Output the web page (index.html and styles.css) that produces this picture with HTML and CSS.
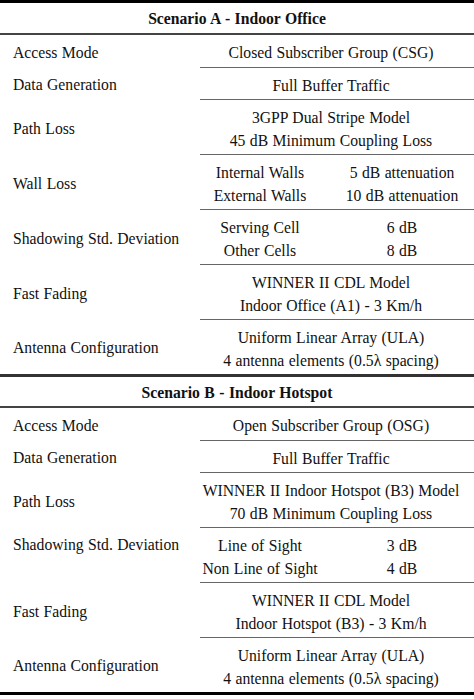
FILE: index.html
```html
<!DOCTYPE html>
<html>
<head>
<meta charset="utf-8">
<link rel="stylesheet" href="styles.css">
</head>
<body>
<div class="table">
  <div class="title top-bar">Scenario A - Indoor Office</div>
  <div class="row">
    <div class="label">Access Mode</div>
    <div class="value">Closed Subscriber Group (CSG)</div>
  </div>
  <div class="row">
    <div class="label">Data Generation</div>
    <div class="value">Full Buffer Traffic</div>
  </div>
  <div class="row">
    <div class="label">Path Loss</div>
    <div class="value tall"><div>3GPP Dual Stripe Model</div><div>45 dB Minimum Coupling Loss</div></div>
  </div>
  <div class="row">
    <div class="label">Wall Loss</div>
    <div class="value sub">
      <div class="c1">Internal Walls</div><div class="c2">5 dB attenuation</div>
      <div class="c1">External Walls</div><div class="c2">10 dB attenuation</div>
    </div>
  </div>
  <div class="row">
    <div class="label">Shadowing Std. Deviation</div>
    <div class="value sub">
      <div class="c1">Serving Cell</div><div class="c2">6 dB</div>
      <div class="c1">Other Cells</div><div class="c2">8 dB</div>
    </div>
  </div>
  <div class="row">
    <div class="label">Fast Fading</div>
    <div class="value tall"><div>WINNER II CDL Model</div><div>Indoor Office (A1) - 3 Km/h</div></div>
  </div>
  <div class="row">
    <div class="label">Antenna Configuration</div>
    <div class="value tall last"><div>Uniform Linear Array (ULA)</div><div>4 antenna elements (0.5λ spacing)</div></div>
  </div>

  <div class="title mid-bar">Scenario B - Indoor Hotspot</div>
  <div class="row">
    <div class="label">Access Mode</div>
    <div class="value">Open Subscriber Group (OSG)</div>
  </div>
  <div class="row">
    <div class="label">Data Generation</div>
    <div class="value">Full Buffer Traffic</div>
  </div>
  <div class="row">
    <div class="label">Path Loss</div>
    <div class="value tall"><div>WINNER II Indoor Hotspot (B3) Model</div><div>70 dB Minimum Coupling Loss</div></div>
  </div>
  <div class="row">
    <div class="label top">Shadowing Std. Deviation</div>
    <div class="value sub">
      <div class="c1">Line of Sight</div><div class="c2">3 dB</div>
      <div class="c1">Non Line of Sight</div><div class="c2">4 dB</div>
    </div>
  </div>
  <div class="row">
    <div class="label">Fast Fading</div>
    <div class="value tall"><div>WINNER II CDL Model</div><div>Indoor Hotspot (B3) - 3 Km/h</div></div>
  </div>
  <div class="row">
    <div class="label">Antenna Configuration</div>
    <div class="value tall last"><div>Uniform Linear Array (ULA)</div><div>4 antenna elements (0.5λ spacing)</div></div>
  </div>
  <div class="bottom-bar"></div>
</div>
</body>
</html>
```
FILE: styles.css
```css
html, body {
  margin: 0;
  padding: 0;
  background: #fff;
}
.table {
  width: 474px;
  font-family: "Liberation Serif", "Times New Roman", serif;
  font-size: 15.7px;
  color: #111;
  word-spacing: 0.5px;
}
.title {
  height: 30px;
  line-height: 32px;
  text-align: center;
  font-weight: bold;
  border-bottom: 2px solid #444;
}
.top-bar {
  border-top: 3px solid #000;
}
.mid-bar {
  border-top: 3px solid #333;
  height: 29px;
  line-height: 31px;
}
.row {
  display: grid;
  grid-template-columns: 200px 1fr;
}
.label {
  padding-left: 13px;
  align-self: center;
  line-height: 22.5px;
  padding-top: 3px;
}
.label.top {
  align-self: start;
  padding-top: 6px;
}
.value {
  padding: 7px 12px 2px 0;
  line-height: 22.5px;
  text-align: center;
  border-bottom: 1px solid #666;
}
.value.last {
  border-bottom: none;
}
.sub {
  display: grid;
  grid-template-columns: 120px 1fr;
  padding-right: 0;
}
.sub .c2 {
  padding-left: 10px;
}
.bottom-bar {
  height: 3px;
  background: #000;
}
```
